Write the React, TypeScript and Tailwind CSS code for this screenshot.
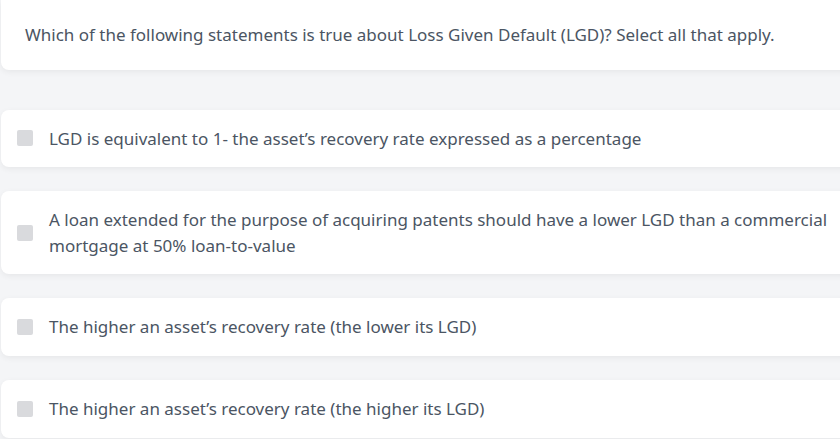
const options = [
  "LGD is equivalent to 1- the asset\u2019s recovery rate expressed as a percentage",
  "A loan extended for the purpose of acquiring patents should have a lower LGD than a commercial mortgage at 50% loan-to-value",
  "The higher an asset\u2019s recovery rate (the lower its LGD)",
  "The higher an asset\u2019s recovery rate (the higher its LGD)",
];

const App = () => {
  return (
    <div className="h-[439px] w-[840px] overflow-hidden bg-[#f4f5f7] font-['Noto_Sans',sans-serif] text-[17px] leading-[25.6px] text-[#4b5563]">
      <div className="ml-[1px] w-[860px]">
        <div className="rounded-b-lg bg-white px-6 py-[22px] shadow-[0_2px_6px_rgba(0,0,0,0.06)]">
          Which of the following statements is true about Loss Given Default (LGD)? Select all that apply.
        </div>

        <div className="mt-10 flex flex-col gap-6">
          {options.map((text) => (
            <label
              key={text}
              className="flex items-center gap-4 rounded-lg bg-white py-4 pl-4 pr-4 shadow-[0_2px_6px_rgba(0,0,0,0.06)]"
            >
              <span className="h-4 w-4 shrink-0 rounded-[2px] bg-[#d9dadd]" />
              <span>{text}</span>
            </label>
          ))}
        </div>
      </div>
    </div>
  );
};

export default App;
